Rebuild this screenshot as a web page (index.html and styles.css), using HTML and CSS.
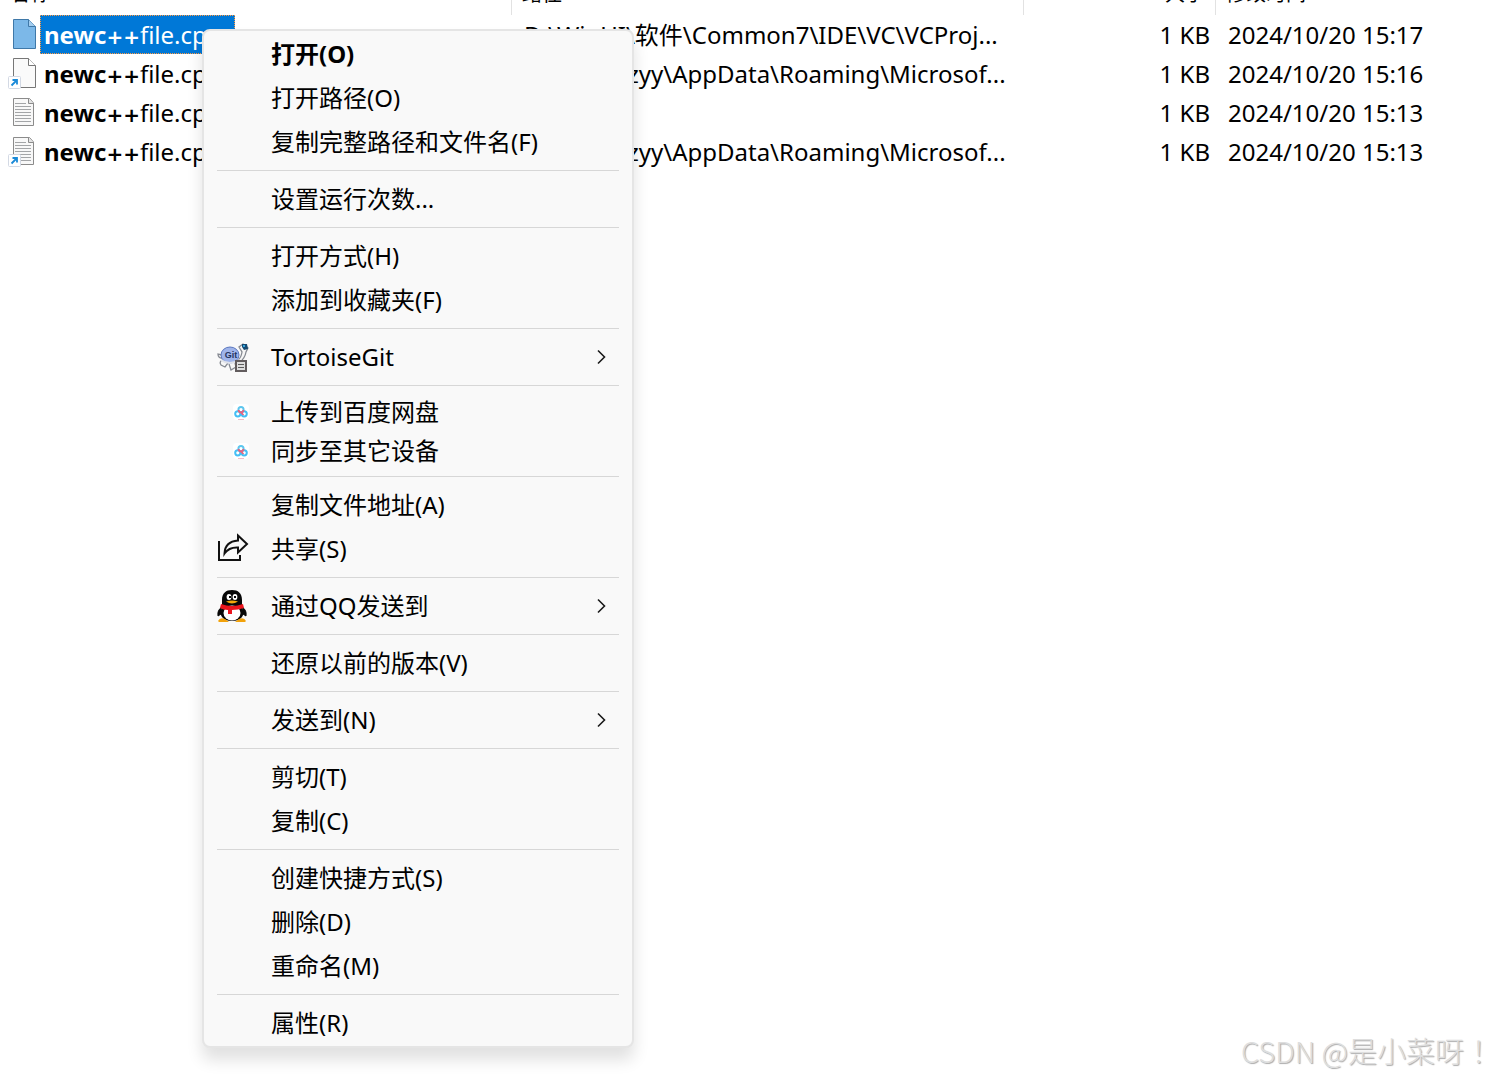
FILE: index.html
```html
<!DOCTYPE html>
<html lang="zh-CN">
<head>
<meta charset="utf-8">
<title>newc++file</title>
<link rel="stylesheet" href="styles.css">
</head>
<body>
<svg class="defs" aria-hidden="true">
  <symbol id="shortcut" viewBox="0 0 13 13">
    <rect x=".5" y=".5" width="12" height="12" rx="1" fill="#fff" stroke="#d3d9e4"/>
    <path d="M3.500 9.500 8.500 4.500M4.500 4H9v4.500" fill="none" stroke="#1a8ad8" stroke-width="1.800"/>
  </symbol>
  <symbol id="lines" viewBox="0 0 28 32">
    <path d="M5.500 2.500h16l4 4.500v22.500h-20z" fill="#f8f8f8" stroke="#8b8b8b"/>
    <path d="M20.500 2.500v5h5" fill="#e4e4e4" stroke="#8b8b8b"/>
    <path d="M7 7.500h11M7 10.500h16M7 13.500h16M7 16.500h16M7 19.500h16M7 22.500h16M7 25.500h16" stroke="#a3a5a7"/>
  </symbol>
  <symbol id="pan" viewBox="0 0 16 16">
    <rect width="16" height="16" rx="4" fill="#fff"/>
    <circle cx="8" cy="5.600" r="2.600" fill="none" stroke="#5cc6ee" stroke-width="1.900"/>
    <circle cx="4.800" cy="9.800" r="2.600" fill="none" stroke="#45bff5" stroke-width="2"/>
    <circle cx="11.200" cy="9.800" r="2.600" fill="none" stroke="#45bff5" stroke-width="2"/>
    <path d="M5.400 6Q6 8.300 8 8.300 10 8.300 10.600 6M6 8.500l2 0 2.500 2.500" fill="none" stroke="#ee5f7b" stroke-width="1.700"/>
    <path d="M5 15.500h6" stroke="#f2bcc8"/>
  </symbol>
  <symbol id="chevron" viewBox="0 0 10 16">
    <path d="M1 1.500 7.500 8 1 14.500" fill="none" stroke="#1a1a1a" stroke-width="1.600"/>
  </symbol>
</svg>

<main>
<table class="files">
  <colgroup><col class="col-name"><col class="col-path"><col class="col-size"><col></colgroup>
  <thead>
    <tr>
      <th><div class="head">名称</div></th>
      <th><div class="head">路径</div></th>
      <th class="size"><div class="head">大小</div></th>
      <th><div class="head">修改时间</div></th>
    </tr>
  </thead>
  <tbody>
    <tr class="selected">
      <td><div class="file"><svg class="file-icon" viewBox="0 0 28 32"><path d="M5.500 1.500h15l7 7v22h-22z" fill="#7cb8e8" stroke="#3f78a8"/><path d="M20.500 1.500v7h7" fill="#a3cdef" stroke="#3f78a8"/></svg><span class="label"><b>newc<span class="plus">++</span></b>file.cpp</span></div></td>
      <td>D:\WinUI\软件\Common7\IDE\VC\VCProj...</td>
      <td class="size">1 KB</td>
      <td>2024/10/20 15:17</td>
    </tr>
    <tr>
      <td><div class="file"><svg class="file-icon" viewBox="0 0 28 32"><path d="M5.500 1.500h15l7 7v22h-22z" fill="#fafafa" stroke="#777"/><path d="M20.500 1.500v7h7" fill="#fff" stroke="#777"/><use href="#shortcut" x="0" y="19" width="13" height="13"/></svg><span class="label"><b>newc<span class="plus">++</span></b>file.cpp</span></div></td>
      <td>C:\Users\zyy\AppData\Roaming\Microsof...</td>
      <td class="size">1 KB</td>
      <td>2024/10/20 15:16</td>
    </tr>
    <tr>
      <td><div class="file"><svg class="file-icon" viewBox="0 0 28 32"><use href="#lines"/></svg><span class="label"><b>newc<span class="plus">++</span></b>file.cpp</span></div></td>
      <td></td>
      <td class="size">1 KB</td>
      <td>2024/10/20 15:13</td>
    </tr>
    <tr>
      <td><div class="file"><svg class="file-icon" viewBox="0 0 28 32"><use href="#lines"/><use href="#shortcut" x="0" y="19" width="13" height="13"/></svg><span class="label"><b>newc<span class="plus">++</span></b>file.cpp</span></div></td>
      <td>C:\Users\zyy\AppData\Roaming\Microsof...</td>
      <td class="size">1 KB</td>
      <td>2024/10/20 15:13</td>
    </tr>
  </tbody>
</table>
</main>

<div class="menu" role="menu">
  <button class="item default" role="menuitem"><span class="text">打开(O)</span></button>
  <button class="item" role="menuitem"><span class="text">打开路径(O)</span></button>
  <button class="item" role="menuitem"><span class="text">复制完整路径和文件名(F)</span></button>
  <hr>
  <button class="item" role="menuitem"><span class="text">设置运行次数...</span></button>
  <hr>
  <button class="item" role="menuitem"><span class="text">打开方式(H)</span></button>
  <button class="item" role="menuitem"><span class="text">添加到收藏夹(F)</span></button>
  <hr>
  <button class="item" role="menuitem">
    <svg class="icon" viewBox="0 0 32 32">
      <path d="M5 17Q1 17 1 13L5 14M21 19Q24 17 25 11L22 6 26 3 31 7 29 11Q28 17 23 21zM5 19Q2 21 4 24L8 26 11 22M12 23l2 6 5-3-1-4" fill="#f6f6f6" stroke="#868a92" stroke-width="1.300"/>
      <ellipse cx="13" cy="14" rx="9" ry="8" fill="#9fb4ea" stroke="#5c78bf"/>
      <path d="M4 19q9 6 18 0" fill="none" stroke="#dfe2ea" stroke-width="2"/>
      <path d="M25 3h5l1 5-4 1-2-3z" fill="#164a72"/><path d="M26 4h2v2h-2z" fill="#36a6dd"/>
      <text x="14" y="17" text-anchor="middle" class="git">Git</text>
      <rect x="19" y="20" width="10" height="10" fill="#dedede" stroke="#625c5e" stroke-width="2"/>
      <path d="M21 23.500h6M21 26.500h6" stroke="#5c5c5c"/>
    </svg>
    <span class="text">TortoiseGit</span><svg class="chevron"><use href="#chevron"/></svg>
  </button>
  <hr>
  <button class="item compact" role="menuitem"><svg class="icon small"><use href="#pan"/></svg><span class="text">上传到百度网盘</span></button>
  <button class="item compact" role="menuitem"><svg class="icon small"><use href="#pan"/></svg><span class="text">同步至其它设备</span></button>
  <hr>
  <button class="item" role="menuitem"><span class="text">复制文件地址(A)</span></button>
  <button class="item" role="menuitem">
    <svg class="icon" viewBox="0 0 32 32"><path d="M2 8v19h21v-5" fill="none" stroke="#111" stroke-width="2"/><path d="M21 2.500 30 11l-9 8.500v-5Q12 14 7.500 20.500 8 8.500 21 7.500z" fill="none" stroke="#111" stroke-width="2"/></svg>
    <span class="text">共享(S)</span>
  </button>
  <hr>
  <button class="item" role="menuitem">
    <svg class="icon" viewBox="0 0 32 32">
      <path d="M5 17Q0 20 1 26l3-2M25 17q5 3 4 9l-3-2" fill="#080808" stroke="#080808"/>
      <path d="M15 0C9 0 5 3 5 10v8q-3 4 0 9 3 4 10 4t10-4q3-5 0-9v-8C25 3 21 0 15 0z" fill="#080808"/>
      <ellipse cx="15" cy="23" rx="8.500" ry="7.500" fill="#fff"/>
      <path d="M1 31q2-4 7-2l4 3H2zM29 31q-2-4-7-2l-4 3h10z" fill="#f2a20b"/>
      <ellipse cx="12" cy="7" rx="2.400" ry="3" fill="#fff"/><ellipse cx="18" cy="7" rx="2.400" ry="3" fill="#fff"/>
      <path d="M12 6h2v2h-2zM17 6h2v2h-2z" fill="#080808"/>
      <path d="M9 11.500q6-2 12 0-6 4-12 0z" fill="#f4a80c"/>
      <path d="M4 14q11 4 22 0l1 4q-6 2-12 2v4h-4v-4q-5 0-8-2z" fill="#eb151d"/>
    </svg>
    <span class="text">通过QQ发送到</span><svg class="chevron"><use href="#chevron"/></svg>
  </button>
  <hr>
  <button class="item" role="menuitem"><span class="text">还原以前的版本(V)</span></button>
  <hr>
  <button class="item" role="menuitem"><span class="text">发送到(N)</span><svg class="chevron"><use href="#chevron"/></svg></button>
  <hr>
  <button class="item" role="menuitem"><span class="text">剪切(T)</span></button>
  <button class="item" role="menuitem"><span class="text">复制(C)</span></button>
  <hr>
  <button class="item" role="menuitem"><span class="text">创建快捷方式(S)</span></button>
  <button class="item" role="menuitem"><span class="text">删除(D)</span></button>
  <button class="item" role="menuitem"><span class="text">重命名(M)</span></button>
  <hr>
  <button class="item" role="menuitem"><span class="text">属性(R)</span></button>
</div>

<div class="watermark">CSDN @是小菜呀<span class="mark" lang="zh-TW">！</span></div>
</body>
</html>
```
FILE: styles.css
```css
* { box-sizing: border-box; }

body {
  margin: 0;
  min-height: 100vh;
  position: relative;
  overflow: hidden;
  background: #fff;
  color: #000;
  font: 24px/32px "Noto Sans", "Noto Sans CJK SC", sans-serif;
}

.defs { position: absolute; width: 0; height: 0; }

.files {
  width: 100%;
  table-layout: fixed;
  border-collapse: separate;
  border-spacing: 0;
}
.col-name, .col-path { width: 512px; }
.col-size { width: 192px; }

.files th { padding: 0; font-weight: 400; text-align: left; }
.head {
  display: flex;
  align-items: flex-end;
  height: 15px;
  padding: 0 10px;
  padding-bottom: 9px;
  border-right: 1px solid #e2e2e2;
  font-size: 20px;
  line-height: 24px;
}
th:last-child .head { border-right: 0; }
th.size .head { justify-content: flex-end; }

.files td {
  height: 39px;
  padding: 0 0 0 12px;
  white-space: nowrap;
}
.files td:first-child { padding-left: 8px; }
.files .size { text-align: right; }
.files td.size { padding-right: 6px; }

.file { display: flex; align-items: center; gap: 4px; }
.file-icon { width: 28px; height: 32px; margin-bottom: 2px; flex: none; }
.label {
  height: 39px;
  padding: 0 12px 0 3px;
  border: 1px solid transparent;
  line-height: 38px;
}
.plus { font-family: "DejaVu Sans", sans-serif; font-size: 20px; line-height: 1; }
.selected .label {
  background: #0078d7;
  border: 1px dotted #ff9a42;
  color: #fff;
}

.menu {
  position: absolute;
  left: 202px;
  top: 29px;
  width: 432px;
  padding: 2px 13px 0;
  border: 2px solid #e5e5e5;
  border-radius: 8px;
  background: #f9f9f9;
  box-shadow: 0 12px 16px rgba(0, 0, 0, .12);
}
.menu hr {
  height: 1px;
  margin: 5px 0 7px;
  border: 0;
  background: #d7d7d7;
}
.item {
  display: grid;
  grid-template-columns: 32px 1fr 10px;
  column-gap: 22px;
  align-items: center;
  width: 100%;
  height: 44px;
  padding: 0 12px 2px 0;
  border: 0;
  background: none;
  color: inherit;
  font: inherit;
  text-align: left;
}
.item.compact { height: 39px; }
.item.default { font-weight: 700; }
.text { grid-column: 2; grid-row: 1; white-space: nowrap; }
.icon { grid-column: 1; grid-row: 1; width: 32px; height: 32px; }
.icon.small { width: 16px; height: 16px; justify-self: end; }
.chevron { grid-column: 3; grid-row: 1; width: 10px; height: 16px; }
.git { font: 700 9px "Liberation Sans", sans-serif; fill: #25355f; }

.watermark {
  position: absolute;
  right: 2px;
  bottom: 8px;
  color: #dedede;
  font: 300 29px/36px "Noto Sans CJK SC", sans-serif;
  text-shadow: 1px 1px 1px #aaa;
}
.mark { font-family: "Noto Sans CJK TC", sans-serif; }
```
